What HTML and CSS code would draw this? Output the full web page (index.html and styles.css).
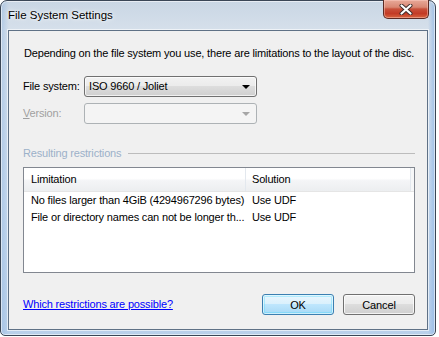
FILE: index.html
```html
<!DOCTYPE html>
<html>
<head>
<meta charset="utf-8">
<link rel="stylesheet" href="styles.css">
</head>
<body>
<div class="window">
  <div class="titlebar">
    <span class="title">File System Settings</span>
    <div class="close">
      <svg width="14" height="11" viewBox="0 0 14 11">
        <path d="M2.5 1.5 L11.5 9.5 M11.5 1.5 L2.5 9.5" stroke="#3b2a28" stroke-width="4" stroke-linecap="round"/>
        <path d="M2.5 1.5 L11.5 9.5 M11.5 1.5 L2.5 9.5" stroke="#ffffff" stroke-width="2.2" stroke-linecap="round"/>
      </svg>
    </div>
  </div>
  <div class="client">
    <p class="desc">Depending on the file system you use, there are limitations to the layout of the disc.</p>
    <div class="field">
      <span class="label">File system:</span>
      <div class="combo">
        <span class="combo-text">ISO 9660 / Joliet</span>
        <span class="arrow"></span>
      </div>
    </div>
    <div class="field field-second">
      <span class="label disabled"><u>V</u>ersion:</span>
      <div class="combo combo-disabled">
        <span class="combo-text"></span>
        <span class="arrow arrow-disabled"></span>
      </div>
    </div>
    <div class="group">
      <span class="group-label">Resulting restrictions</span>
      <span class="group-line"></span>
    </div>
    <div class="list">
      <div class="list-header">
        <div class="col col-1">Limitation</div>
        <div class="col col-2">Solution</div>
        <div class="col col-fill"></div>
      </div>
      <div class="list-row">
        <div class="cell cell-1">No files larger than 4GiB (4294967296 bytes)</div>
        <div class="cell cell-2">Use UDF</div>
      </div>
      <div class="list-row">
        <div class="cell cell-1">File or directory names can not be longer th...</div>
        <div class="cell cell-2">Use UDF</div>
      </div>
    </div>
    <div class="footer">
      <a class="link" href="#">Which restrictions are possible?</a>
      <div class="buttons">
        <button class="btn btn-default">OK</button>
        <button class="btn">Cancel</button>
      </div>
    </div>
  </div>
</div>
</body>
</html>
```

FILE: styles.css
```css
html, body {
  margin: 0;
  padding: 0;
  background: #ffffff;
}

body {
  width: 439px;
  height: 337px;
  overflow: hidden;
  font-family: "Liberation Sans", Arial, sans-serif;
  font-size: 11px;
  letter-spacing: -0.17px;
  color: #000;
}

.window {
  box-sizing: border-box;
  width: 436px;
  height: 336px;
  border: 1px solid #3a4656;
  border-radius: 7px 7px 5px 5px;
  background:
    linear-gradient(to right, rgba(150,185,225,0.55) 0, rgba(150,185,225,0) 8px, rgba(150,185,225,0) 427px, rgba(140,180,228,0.7) 434px),
    linear-gradient(to bottom, #c9d6e4 0, #d6e0eb 30px, #c8daee 200px, #b9d0ea 100%);
  box-shadow: inset 0 0 0 1px rgba(255,255,255,0.55);
  display: flex;
  flex-direction: column;
}

.titlebar {
  height: 29px;
  display: flex;
  justify-content: space-between;
  align-items: flex-start;
  padding-left: 7px;
}

.title {
  font-family: "Liberation Sans", Arial, sans-serif;
  font-size: 11.5px;
  letter-spacing: 0;
  color: #000;
  margin-top: 8px;
  text-shadow: 0 0 6px rgba(255,255,255,0.9), 0 0 3px rgba(255,255,255,0.9);
}

.close {
  width: 46px;
  height: 19px;
  margin-top: -1px;
  margin-right: 6px;
  box-sizing: border-box;
  border: 1px solid #5b2a24;
  border-top: none;
  border-radius: 0 0 5px 5px;
  background: linear-gradient(to bottom, #e8a999 0, #d98773 40%, #c8503a 50%, #c33b26 75%, #d7643f 100%);
  box-shadow: inset 0 0 0 1px rgba(255,210,200,0.45);
  display: flex;
  align-items: center;
  justify-content: center;
}

.client {
  box-sizing: border-box;
  height: 300px;
  margin: 0 7px;
  background: #f0f0f0;
  border: 1px solid #5f7186;
  box-shadow: 0 0 0 1px rgba(255,255,255,0.6);
  padding: 0 12px 0 14px;
  display: flex;
  flex-direction: column;
}

.desc {
  margin: 16px 0 0 1px;
  line-height: 13px;
  white-space: nowrap;
}

.field {
  display: flex;
  align-items: center;
  margin-top: 16px;
}

.field-second {
  margin-top: 6px;
}

.label {
  width: 61px;
  line-height: 13px;
}

.disabled {
  color: #a0a0a0;
}

.combo {
  box-sizing: border-box;
  width: 173px;
  height: 21px;
  border: 1px solid #707070;
  border-radius: 3px;
  background: linear-gradient(to bottom, #f2f2f2 0, #ebebeb 50%, #dddddd 50%, #cfcfcf 100%);
  box-shadow: inset 0 0 0 1px rgba(255,255,255,0.7);
  display: flex;
  align-items: center;
  justify-content: space-between;
  padding: 0 6px 0 4px;
}

.combo-disabled {
  border-color: #adb2b5;
  background: #f4f4f4;
  box-shadow: none;
}

.combo-text {
  line-height: 13px;
}

.arrow {
  width: 0;
  height: 0;
  border-left: 4px solid transparent;
  border-right: 4px solid transparent;
  border-top: 4px solid #000;
}

.arrow-disabled {
  border-top-color: #a6a6a6;
}

.group {
  display: flex;
  align-items: center;
  margin-top: 23px;
  line-height: 13px;
}

.group-label {
  color: #9cb1c9;
}

.group-line {
  flex: 1;
  height: 1px;
  background: #bcbcbc;
  margin-left: 7px;
}

.list {
  box-sizing: border-box;
  margin-top: 7px;
  height: 106px;
  border: 1px solid #828790;
  background: #ffffff;
}

.list-header {
  display: flex;
  height: 24px;
  box-sizing: border-box;
  border-bottom: 1px solid #e5e5e5;
  background: linear-gradient(to bottom, #ffffff 0, #ffffff 45%, #f4f5f7 55%, #eceef0 100%);
}

.col {
  box-sizing: border-box;
  line-height: 23px;
  border-right: 1px solid #e3e8ee;
}

.col-1 {
  width: 222px;
  padding-left: 7px;
}

.col-2 {
  width: 165px;
  padding-left: 6px;
}

.col-fill {
  flex: 1;
  border-right: none;
  background: #f6f7f8;
}

.list-row {
  display: flex;
  height: 17px;
  line-height: 17px;
}

.list-row:first-of-type {
  margin-top: 1px;
}

.cell {
  box-sizing: border-box;
  white-space: nowrap;
}

.cell-1 {
  width: 222px;
  padding-left: 7px;
}

.cell-2 {
  padding-left: 6px;
}

.footer {
  margin-top: 21px;
  display: flex;
  align-items: center;
  justify-content: space-between;
}

.link {
  color: #0000ff;
  text-decoration: underline;
  line-height: 13px;
}

.buttons {
  display: flex;
  gap: 9px;
}

.btn {
  box-sizing: border-box;
  width: 72px;
  height: 21px;
  margin: 0;
  padding: 0;
  font-family: "Liberation Sans", Arial, sans-serif;
  font-size: 11px;
  letter-spacing: -0.1px;
  color: #000;
  border: 1px solid #707070;
  border-radius: 3px;
  background: linear-gradient(to bottom, #f2f2f2 0, #ebebeb 50%, #dddddd 50%, #cfcfcf 100%);
  box-shadow: inset 0 0 0 1px rgba(255,255,255,0.75);
}

.btn-default {
  border-color: #3c7fb1;
  background: linear-gradient(to bottom, #eaf6fd 0, #d9f0fc 50%, #bee6fd 50%, #a7d9f5 100%);
  box-shadow: inset 0 0 0 1px rgba(255,255,255,0.6), inset 0 0 0 2px rgba(72,216,251,0.35);
}
```
